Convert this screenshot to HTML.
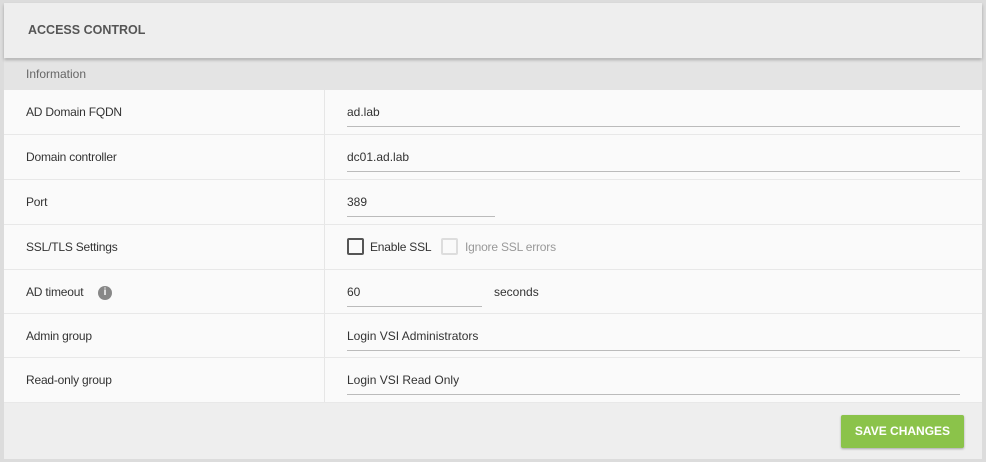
<!DOCTYPE html>
<html><head><style>
*{margin:0;padding:0;box-sizing:border-box}
body{width:986px;height:462px;background:#dcdcdc;font-family:"Liberation Sans",Arial,sans-serif;font-size:12px;color:#333;position:relative;overflow:hidden}
.panel{position:absolute;left:4px;top:3px;width:978px;height:456px;background:#eee}
.hdr{position:absolute;left:0;top:0;width:978px;height:55px;background:#eee;box-shadow:0 2px 3px rgba(0,0,0,.25);z-index:2}
.hdr span{position:absolute;left:24px;top:20px;font-size:12.5px;font-weight:bold;color:#555}
.info{position:absolute;left:0;top:56px;width:978px;height:31px;background:#e4e4e4;color:#666}
.info span{position:absolute;left:22px;top:8px}
.row{position:absolute;left:0;width:978px;background:#fafafa;border-bottom:1px solid #e8e8e8}
.row .l{position:absolute;left:22px;top:15px;color:#333;letter-spacing:-0.2px}
.row .d{position:absolute;left:320px;top:0;bottom:0;border-left:1px solid #e6e6e6}
.in{position:absolute;left:343px;top:15px;height:22px;border-bottom:1px solid #bbb;padding-left:0;color:#333}
.footer{position:absolute;left:0;top:400px;width:978px;height:56px;background:#eee}
.btn{position:absolute;left:837px;top:12px;width:123px;height:33px;background:#8bc34a;color:#fff;font-weight:bold;font-size:12px;text-align:center;line-height:33px;border-radius:2px;box-shadow:0 1px 2px rgba(0,0,0,.3)}
.cb{position:absolute;top:13px;width:17px;height:17px;border-radius:2px}
</style></head><body>
<div class="panel">
<div class="hdr"><span>ACCESS CONTROL</span></div>
<div class="info"><span>Information</span></div>
<div class="row" style="top:87px;height:45px"><span class="l">AD Domain FQDN</span><div class="d"></div><div class="in" style="width:613px">ad.lab</div></div>
<div class="row" style="top:132px;height:45px"><span class="l">Domain controller</span><div class="d"></div><div class="in" style="width:613px">dc01.ad.lab</div></div>
<div class="row" style="top:177px;height:45px"><span class="l">Port</span><div class="d"></div><div class="in" style="width:148px">389</div></div>
<div class="row" style="top:222px;height:45px"><span class="l">SSL/TLS Settings</span><div class="d"></div>
<div class="cb" style="left:343px;border:2px solid #555"></div><span style="position:absolute;left:366px;top:15px;letter-spacing:-0.2px">Enable SSL</span>
<div class="cb" style="left:437px;border:2px solid #ddd"></div><span style="position:absolute;left:461px;top:15px;color:#999;letter-spacing:-0.2px">Ignore SSL errors</span></div>
<div class="row" style="top:267px;height:44px"><span class="l">AD timeout</span>
<span style="position:absolute;left:94px;top:16px;width:14px;height:14px;border-radius:50%;background:#888;color:#fff;font-size:10px;font-weight:bold;text-align:center;line-height:14px">i</span>
<div class="d"></div><div class="in" style="width:135px">60</div><span style="position:absolute;left:490px;top:15px">seconds</span></div>
<div class="row" style="top:311px;height:44px"><span class="l">Admin group</span><div class="d"></div><div class="in" style="width:613px">Login VSI Administrators</div></div>
<div class="row" style="top:355px;height:45px"><span class="l">Read-only group</span><div class="d"></div><div class="in" style="width:613px">Login VSI Read Only</div></div>
<div class="footer"><div class="btn">SAVE CHANGES</div></div>
</div>
</body></html>
